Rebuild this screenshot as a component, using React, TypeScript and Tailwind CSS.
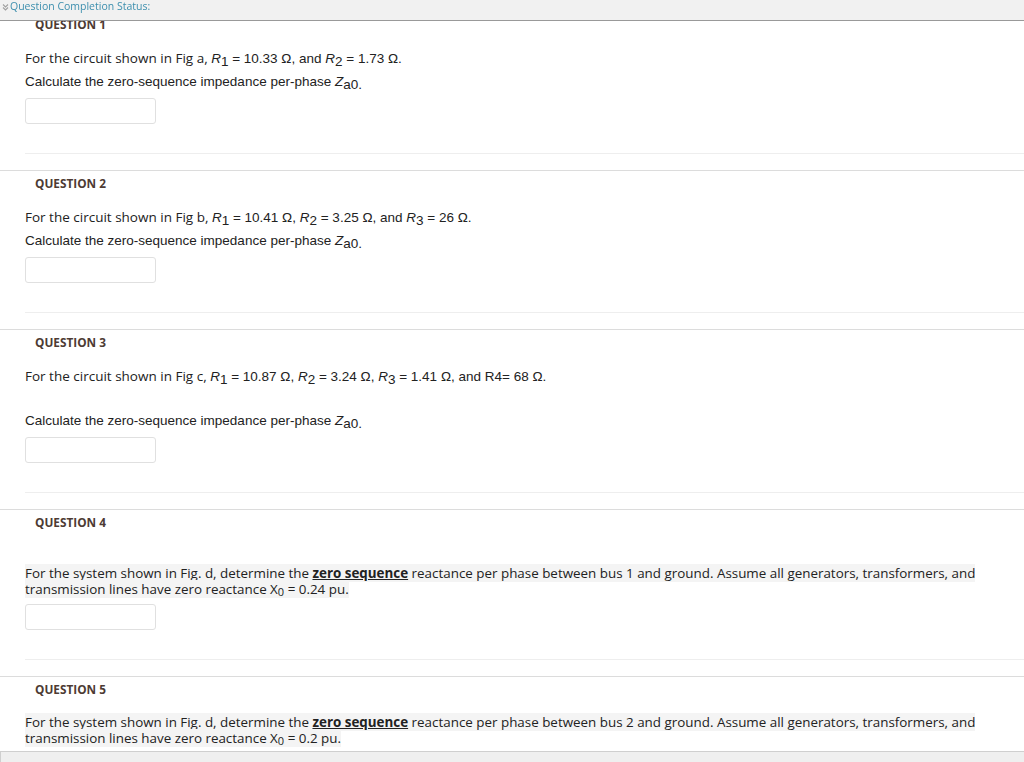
const sans = "font-['Open_Sans',_'Liberation_Sans',_sans-serif]";
const arial = "font-['Liberation_Sans',_Arial,_sans-serif]";

function Sub({ children }: { children: React.ReactNode }) {
  return <span className="relative top-[3px]">{children}</span>;
}

function Answer({ mt }: { mt: string }) {
  return <div className={`${mt} h-[26px] w-[131px] rounded-[3px] border border-[#e0e0e0] bg-white`} />;
}

function Heading({ n }: { n: number }) {
  return (
    <div className={`${sans} h-[20px] pl-[35px] pt-[5px] text-[11.8px] font-bold leading-[14px] text-[#4d3b34]`}>
      QUESTION {n}
    </div>
  );
}

function Block({ n, children }: { n: number; children: React.ReactNode }) {
  return (
    <section className="border-t border-[#dcdcdc]">
      <Heading n={n} />
      <div className="ml-[25px] border-b border-[#eeeeee] pb-[29px]">{children}</div>
      <div className="h-[16px]" />
    </section>
  );
}

function Calc() {
  return (
    <p className={`${arial} h-[24px] text-[13.5px] leading-[24px] text-[#222]`}>
      Calculate the zero-sequence impedance per-phase <i>Z</i>
      <Sub>a0.</Sub>
    </p>
  );
}

function SystemText({ bus, x }: { bus: number; x: string }) {
  return (
    <p className={`${sans} h-[32px] text-[13.4px] leading-[16px] text-[#222]`}>
      <span className="bg-[#f4f4f4]">
        For the system shown in Fig. d, determine the <b className="underline">zero sequence</b> reactance per
        phase between bus {bus} and ground. Assume all generators, transformers, and
      </span>
      <br />
      <span className="bg-[#f4f4f4]">
        transmission lines have zero reactance X<span className="relative top-[2px] text-[11px]">0</span> = {x} pu.
      </span>
    </p>
  );
}

function Given({ fig, children }: { fig: string; children: React.ReactNode }) {
  return (
    <p className={`${arial} mt-[14px] h-[24px] text-[13.5px] leading-[24px] text-[#222]`}>
      <span className={sans}>For the circuit shown in Fig {fig}, </span>
      {children}
    </p>
  );
}

export default function App() {
  return (
    <div className="min-h-[762px] bg-white">
      <header className="fixed left-0 right-0 top-0 z-10 flex h-[21px] items-start border-b border-[#999] bg-[#f1f1f1]">
        <svg width="7" height="9" viewBox="0 0 7 9" className="ml-[2px] mt-[3px]">
          <path d="M1 1.5 L3.5 4 L6 1.5 M1 4.5 L3.5 7 L6 4.5" stroke="#a0a0a0" strokeWidth="1.1" fill="none" />
        </svg>
        <span className={`${sans} ml-[1px] text-[10.5px] leading-[12px] text-[#3d8fae]`}>Question Completion Status:</span>
      </header>

      <div className="h-[11px]" />

      <Block n={1}>
        <Given fig="a">
          <i>R</i>
          <Sub>1</Sub> = 10.33 Ω, and <i>R</i>
          <Sub>2</Sub> = 1.73 Ω.
        </Given>
        <Calc />
        <Answer mt="mt-[4px]" />
      </Block>

      <Block n={2}>
        <Given fig="b">
          <i>R</i>
          <Sub>1</Sub> = 10.41 Ω, <i>R</i>
          <Sub>2</Sub> = 3.25 Ω, and <i>R</i>
          <Sub>3</Sub> = 26 Ω.
        </Given>
        <Calc />
        <Answer mt="mt-[4px]" />
      </Block>

      <Block n={3}>
        <Given fig="c">
          <i>R</i>
          <Sub>1</Sub> = 10.87 Ω, <i>R</i>
          <Sub>2</Sub> = 3.24 Ω, <i>R</i>
          <Sub>3</Sub> = 1.41 Ω, and R4= 68 Ω.
        </Given>
        <div className="h-[21px]" />
        <Calc />
        <Answer mt="mt-[4px]" />
      </Block>

      <Block n={4}>
        <div className="mt-[35px]">
          <SystemText bus={1} x="0.24" />
        </div>
        <Answer mt="mt-[7px]" />
      </Block>

      <section className="border-t border-[#dcdcdc]">
        <Heading n={5} />
        <div className="ml-[25px] mt-[17px]">
          <SystemText bus={2} x="0.2" />
        </div>
        <div className="h-[40px]" />
      </section>

      <footer className="fixed bottom-0 left-0 right-0 h-[11px] border-l border-t border-[#cfcfcf] bg-[#efefef]" />
    </div>
  );
}
